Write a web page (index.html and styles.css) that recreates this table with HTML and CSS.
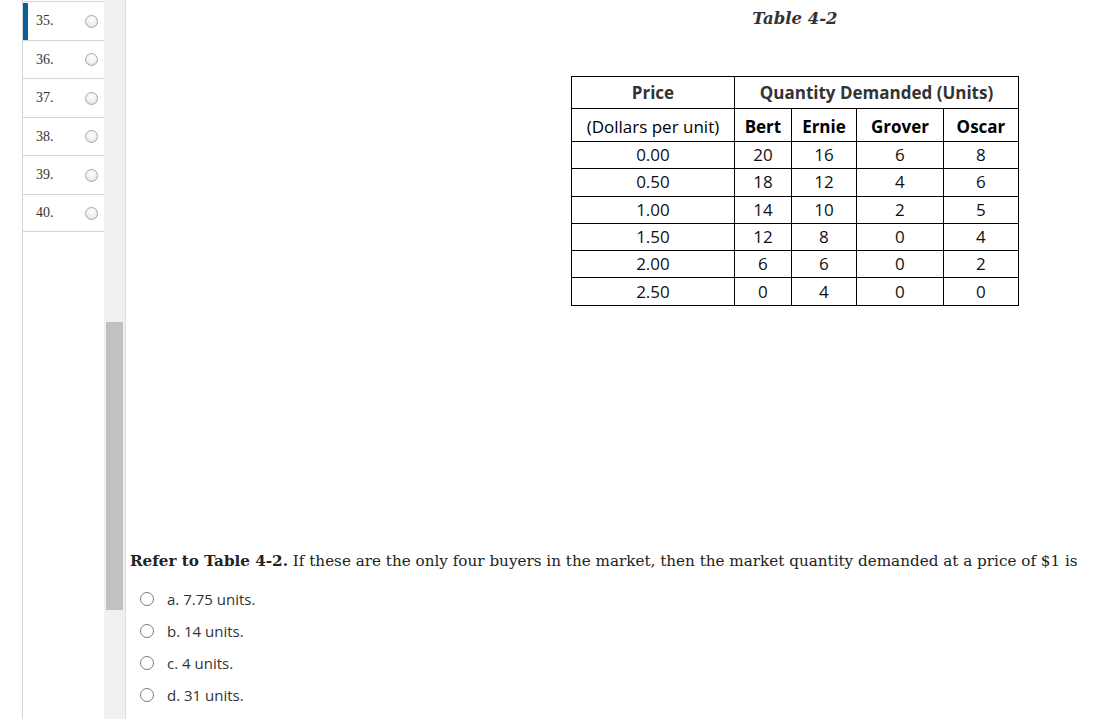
FILE: index.html
```html
<!DOCTYPE html>
<html>
<head>
<meta charset="utf-8">
<link rel="stylesheet" href="styles.css">
</head>
<body>
<div class="page">
  <div class="gutter"></div>
  <ul class="qnav">
    <li class="qitem current"><span class="qnum">35.</span><span class="qdot"></span></li>
    <li class="qitem"><span class="qnum">36.</span><span class="qdot"></span></li>
    <li class="qitem"><span class="qnum">37.</span><span class="qdot"></span></li>
    <li class="qitem"><span class="qnum">38.</span><span class="qdot"></span></li>
    <li class="qitem"><span class="qnum">39.</span><span class="qdot"></span></li>
    <li class="qitem"><span class="qnum">40.</span><span class="qdot"></span></li>
  </ul>
  <div class="track"><div class="thumb"></div></div>
  <main class="main">
    <div class="figure-row">
      <div class="figure">
        <h2 class="fig-title">Table 4-2</h2>
        <table class="data">
          <colgroup>
            <col class="c-price">
            <col class="c-bert">
            <col class="c-ernie">
            <col class="c-grover">
            <col class="c-oscar">
          </colgroup>
          <tr class="head1">
            <th>Price</th>
            <th colspan="4">Quantity Demanded (Units)</th>
          </tr>
          <tr class="head2">
            <td>(Dollars per unit)</td>
            <th>Bert</th>
            <th>Ernie</th>
            <th>Grover</th>
            <th>Oscar</th>
          </tr>
          <tr><td>0.00</td><td>20</td><td>16</td><td>6</td><td>8</td></tr>
          <tr><td>0.50</td><td>18</td><td>12</td><td>4</td><td>6</td></tr>
          <tr><td>1.00</td><td>14</td><td>10</td><td>2</td><td>5</td></tr>
          <tr><td>1.50</td><td>12</td><td>8</td><td>0</td><td>4</td></tr>
          <tr><td>2.00</td><td>6</td><td>6</td><td>0</td><td>2</td></tr>
          <tr><td>2.50</td><td>0</td><td>4</td><td>0</td><td>0</td></tr>
        </table>
      </div>
    </div>
    <p class="question"><strong>Refer to Table 4-2.</strong> If these are the only four buyers in the market, then the market quantity demanded at a price of $1 is</p>
    <ul class="options">
      <li class="option"><span class="radio"></span>a. 7.75 units.</li>
      <li class="option"><span class="radio"></span>b. 14 units.</li>
      <li class="option"><span class="radio"></span>c. 4 units.</li>
      <li class="option"><span class="radio"></span>d. 31 units.</li>
    </ul>
  </main>
</div>
</body>
</html>
```

FILE: styles.css
```css
html, body {
  margin: 0;
  padding: 0;
  background: #fff;
}
.page {
  display: flex;
  height: 719px;
  overflow: hidden;
}
.gutter {
  width: 22px;
  flex: none;
}
.qnav {
  list-style: none;
  margin: 0;
  padding: 1px 0 0 0;
  width: 81px;
  flex: none;
  border-left: 1px solid #d4d4d4;
}
.qitem {
  display: flex;
  align-items: center;
  height: 38.5px;
  box-sizing: border-box;
  border-top: 1px solid #d4d4d4;
  padding-left: 13px;
  padding-top: 1px;
  position: relative;
  font-family: "Liberation Serif", serif;
  font-size: 14px;
  color: #333;
}
.qitem:last-child {
  border-bottom: 1px solid #d4d4d4;
}
.qitem.current::before {
  content: "";
  position: absolute;
  left: 0;
  top: 1px;
  bottom: 0;
  width: 5px;
  background: #0b5e96;
}
.qnum {
  width: 49px;
}
.qdot {
  width: 13px;
  height: 13px;
  border-radius: 50%;
  box-sizing: border-box;
  border: 1px solid #a9a9a9;
  background: radial-gradient(circle at 50% 35%, #ffffff 0%, #f3f3f3 45%, #d6d6d6 100%);
}
.track {
  width: 22px;
  flex: none;
  background: #f0f0f0;
  border-right: 1px solid #dcdcdc;
  padding-left: 2px;
  box-sizing: border-box;
}
.thumb {
  width: 17px;
  height: 288px;
  margin-top: 322px;
  background: #c1c1c1;
}
.main {
  flex: 1;
  padding: 0 0 0 4px;
  min-width: 0;
}
.figure-row {
  display: flex;
  justify-content: flex-end;
  padding-right: 79px;
}
.figure {
  display: flex;
  flex-direction: column;
  align-items: center;
}
.fig-title {
  margin: 9px 0 48px 0;
  font-family: "DejaVu Serif", serif;
  font-style: italic;
  font-weight: bold;
  font-size: 16.5px;
  color: #333;
}
.data {
  border-collapse: collapse;
  table-layout: fixed;
  width: 447px;
  font-family: "Open Sans", sans-serif;
  font-size: 17px;
  color: #111;
}
.c-price { width: 163px; }
.c-bert { width: 57px; }
.c-ernie { width: 65px; }
.c-grover { width: 87px; }
.c-oscar { width: 75px; }
.data td, .data th {
  border: 1px solid #000;
  text-align: center;
  padding: 0;
  height: 26.3px;
  line-height: 22px;
  white-space: nowrap;
}
.head1 th {
  height: 31px;
  color: #333;
  font-weight: bold;
}
.head2 td, .head2 th {
  height: 28px;
  color: #000;
  padding-top: 4px;
  vertical-align: middle;
}
.head2 th {
  font-weight: bold;
}
.question {
  margin: 246px 0 0 0;
  font-family: "DejaVu Serif", serif;
  font-size: 15.2px;
  color: #222;
  white-space: nowrap;
}
.question strong {
  font-weight: bold;
}
.options {
  list-style: none;
  margin: 13px 0 0 0;
  padding: 0 0 0 10px;
}
.option {
  display: flex;
  align-items: center;
  height: 32px;
  font-family: "Open Sans", sans-serif;
  font-size: 15px;
  color: #333;
}
.radio {
  width: 14px;
  height: 14px;
  box-sizing: border-box;
  border: 1px solid #7a7a7a;
  border-radius: 50%;
  margin-right: 13px;
}
```
